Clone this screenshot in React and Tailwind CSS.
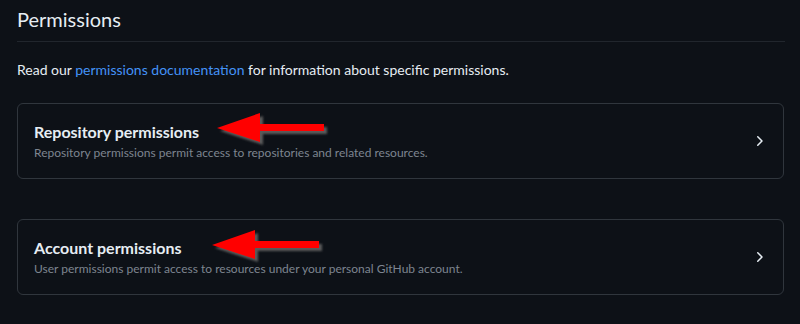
function Arrow({ className }) {
  const pts = "2,17 45,2 45,13 109,13 109,20 45,20 45,31";
  return (
    <svg
      className={className}
      width="118"
      height="38"
      viewBox="0 0 118 38"
      aria-hidden="true"
    >
      <defs>
        <filter id="arrowShadow" x="-10%" y="-20%" width="130%" height="150%">
          <feGaussianBlur stdDeviation="1" />
        </filter>
      </defs>
      <polygon points={pts} transform="translate(3 3)" fill="#5a5a5a" filter="url(#arrowShadow)" />
      <polygon points={pts} fill="#ff0000" />
    </svg>
  );
}

function Chevron() {
  return (
    <svg width="16" height="16" viewBox="0 0 16 16" fill="#e6edf3" aria-hidden="true">
      <path d="M6.22 3.22a.75.75 0 0 1 1.06 0l4.25 4.25a.75.75 0 0 1 0 1.06l-4.25 4.25a.751.751 0 0 1-1.042-.018.751.751 0 0 1-.018-1.042L9.94 8 6.22 4.28a.75.75 0 0 1 0-1.06Z" />
    </svg>
  );
}

function PermissionCard({ title, description, arrowClass }) {
  return (
    <div className="relative flex items-center justify-between rounded-md border border-[#30363d] h-[76px] pl-4 pr-4">
      <div className="flex flex-col">
        <span className="text-base font-bold leading-6 text-[#e6edf3]">{title}</span>
        <span className="text-xs leading-[18px] text-[#7d8590]">{description}</span>
      </div>
      <Chevron />
      <Arrow className={arrowClass} />
    </div>
  );
}

export default function App() {
  return (
    <div
      className="min-h-screen bg-[#0d1117] pl-[17px] pr-4 text-[#e6edf3]"
      style={{ fontFamily: 'Lato, "Noto Sans", sans-serif' }}
    >
      <h2 className="pt-[5px] pb-[7px] text-[20px] leading-[29px] font-normal border-b border-[#21262d] mr-[-1px]">
        Permissions
      </h2>

      <p className="mt-[18px] text-sm leading-5">
        Read our{" "}
        <a href="#" className="text-[#4493f8]">
          permissions documentation
        </a>{" "}
        for information about specific permissions.
      </p>

      <div className="mt-[23px] flex flex-col gap-10">
        <PermissionCard
          title="Repository permissions"
          description="Repository permissions permit access to repositories and related resources."
          arrowClass="absolute left-[197px] top-[7px]"
        />
        <PermissionCard
          title="Account permissions"
          description="User permissions permit access to resources under your personal GitHub account."
          arrowClass="absolute left-[192px] top-[8px]"
        />
      </div>
    </div>
  );
}
